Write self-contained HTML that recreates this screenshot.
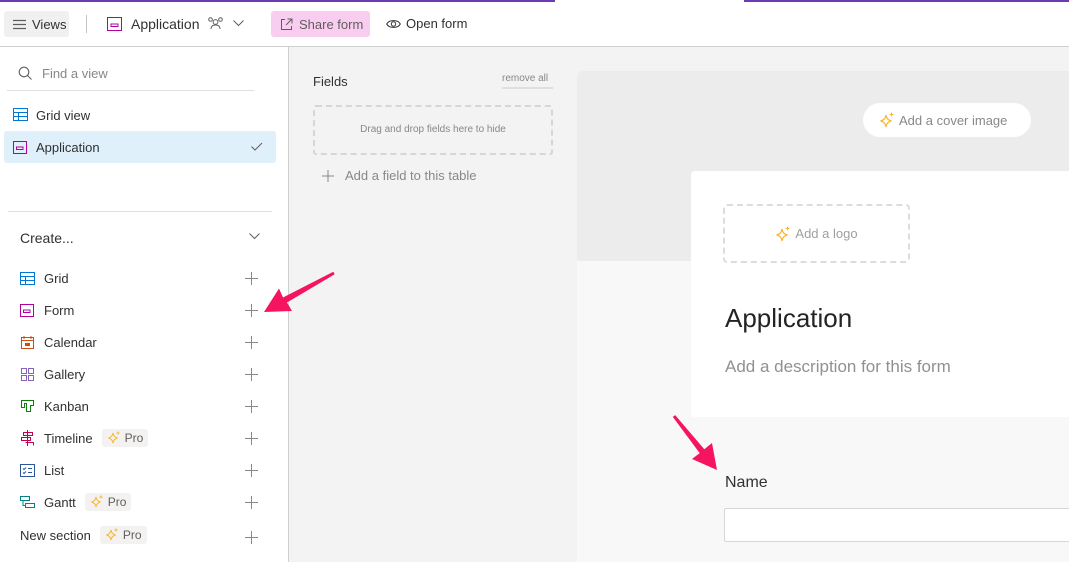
<!DOCTYPE html>
<html><head><meta charset="utf-8"><style>
*{box-sizing:border-box;margin:0;padding:0}
body{width:1069px;height:562px;overflow:hidden;position:relative;background:#fff;font-family:"Liberation Sans",sans-serif;color:#323130}
.a{position:absolute}
.t13{font-size:13px}
.plus{position:absolute;left:245px;width:13px;height:13px}
.plus:before{content:"";position:absolute;left:6px;top:0;width:1px;height:13px;background:#8a8886}
.plus:after{content:"";position:absolute;top:6px;left:0;width:13px;height:1px;background:#8a8886}
.item{position:absolute;left:20px;height:20px;display:flex;align-items:center;font-size:13px;color:#323130}
.item svg{margin-right:9px}
.pro{display:inline-flex;align-items:center;background:#f3f2f1;border-radius:3px;height:18px;padding:0 5px;margin-left:9px;font-size:12px;color:#605e5c}
.pro svg{margin-right:4px}
</style></head><body>
<div class="a" style="left:0;top:0;width:555px;height:2px;background:#6b3bb3"></div>
<div class="a" style="left:744px;top:0;width:325px;height:2px;background:#6b3bb3"></div>
<!-- top bar -->
<div class="a" style="left:4px;top:11px;width:65px;height:26px;background:#f0f0f0;border-radius:3px;font-size:13px;display:flex;align-items:center;padding-left:9px">
<svg width="13" height="11" style="margin-right:6px"><path d="M0 1.5h13M0 5.5h13M0 9.5h13" stroke="#605e5c" stroke-width="1.3"/></svg>Views</div>
<div class="a" style="left:86px;top:15px;width:1px;height:18px;background:#c8c6c4"></div>
<svg class="a" style="left:107px;top:17px" width="15" height="14"><rect x=".5" y=".5" width="14" height="13" fill="none" stroke="#b4009e"/><rect x="4" y="7" width="7" height="2.5" fill="none" stroke="#b4009e"/></svg>
<div class="a" style="left:131px;top:16px;font-size:14px;color:#323130">Application</div>
<svg class="a" style="left:207px;top:16px" width="17" height="14"><circle cx="8.5" cy="6" r="2.4" fill="none" stroke="#605e5c"/><path d="M4 13c0-3 2-4 4.5-4s4.5 1 4.5 4" fill="none" stroke="#605e5c"/><circle cx="3.5" cy="3.5" r="1.8" fill="none" stroke="#605e5c"/><circle cx="13.5" cy="3.5" r="1.8" fill="none" stroke="#605e5c"/></svg>
<svg class="a" style="left:233px;top:20px" width="11" height="7"><path d="M.5.5l5 5 5-5" fill="none" stroke="#605e5c"/></svg>
<div class="a" style="left:271px;top:11px;width:99px;height:26px;background:#f9cdf0;border-radius:3px;font-size:13px;color:#605e5c;display:flex;align-items:center;padding-left:9px">
<svg width="13" height="13" style="margin-right:6px"><path d="M5 1.5H1.5v10h10V8M7.5 1h4.5v4.5M12 1L6 7" fill="none" stroke="#605e5c"/></svg>Share form</div>
<div class="a" style="left:386px;top:16px;font-size:13px;color:#323130;display:flex;align-items:center">
<svg width="15" height="10" style="margin-right:5px"><path d="M.7 5C3 .5 12 .5 14.3 5 12 9.5 3 9.5.7 5z" fill="none" stroke="#323130"/><circle cx="7.5" cy="5" r="2.2" fill="none" stroke="#323130"/></svg>Open form</div>
<div class="a" style="left:0;top:46px;width:1069px;height:1px;background:#d0d0d0"></div>
<!-- sidebar -->
<div class="a" style="left:288px;top:47px;width:1px;height:515px;background:#d0d0d0"></div>
<svg class="a" style="left:18px;top:66px" width="14" height="14"><circle cx="6" cy="6" r="4.8" fill="none" stroke="#605e5c" stroke-width="1.1"/><path d="M9.5 9.5l4 4" stroke="#605e5c" stroke-width="1.1"/></svg>
<div class="a t13" style="left:42px;top:66px;color:#8a8886">Find a view</div>
<div class="a" style="left:7px;top:90px;width:247px;height:1px;background:#e1dfdd"></div>
<svg class="a" style="left:13px;top:108px" width="15" height="13"><rect x=".5" y=".5" width="14" height="12" fill="none" stroke="#0078d4"/><path d="M.5 4.5h14M.5 8.5h14M5.5 4.5v8" stroke="#0078d4"/></svg>
<div class="a t13" style="left:36px;top:108px">Grid view</div>
<div class="a" style="left:4px;top:131px;width:272px;height:32px;background:#dff0fa;border-radius:3px"></div>
<svg class="a" style="left:13px;top:141px" width="14" height="13"><rect x=".5" y=".5" width="13" height="12" fill="none" stroke="#b4009e"/><rect x="3.5" y="6" width="6.5" height="2.5" fill="none" stroke="#b4009e"/></svg>
<div class="a t13" style="left:36px;top:140px">Application</div>
<svg class="a" style="left:251px;top:142px" width="12" height="9"><path d="M.5 4.5l3.5 3.5 7-7" fill="none" stroke="#605e5c"/></svg>
<div class="a" style="left:8px;top:211px;width:264px;height:1px;background:#e1dfdd"></div>
<div class="a" style="left:20px;top:230px;font-size:14px">Create...</div>
<svg class="a" style="left:249px;top:233px" width="11" height="7"><path d="M.5.5l5 5 5-5" fill="none" stroke="#605e5c"/></svg>

<div class="item" style="top:268px"><svg width="15" height="13"><rect x=".5" y=".5" width="14" height="12" fill="none" stroke="#0078d4"/><path d="M.5 4.5h14M.5 8.5h14M5.5 4.5v8" stroke="#0078d4"/></svg>Grid</div>
<div class="plus" style="top:272px"></div>
<div class="item" style="top:300px"><svg width="15" height="13"><rect x=".5" y=".5" width="13" height="12" fill="none" stroke="#b4009e"/><rect x="3.5" y="6" width="6.5" height="2.5" fill="none" stroke="#b4009e"/></svg>Form</div>
<div class="plus" style="top:304px"></div>
<div class="item" style="top:332px"><svg width="15" height="14"><rect x="1.5" y="2.5" width="12" height="11" fill="none" stroke="#ca5010"/><path d="M1.5 5.5h12M4 1v3M11 1v3" stroke="#ca5010"/><rect x="5" y="8" width="5" height="3" fill="#ca5010"/></svg>Calendar</div>
<div class="plus" style="top:336px"></div>
<div class="item" style="top:364px"><svg width="15" height="14"><rect x="1.5" y="1.5" width="5" height="5" fill="none" stroke="#8764b8"/><rect x="8.5" y="1.5" width="5" height="5" fill="none" stroke="#8764b8"/><rect x="1.5" y="8.5" width="5" height="5" fill="none" stroke="#8764b8"/><rect x="8.5" y="8.5" width="5" height="5" fill="none" stroke="#8764b8"/></svg>Gallery</div>
<div class="plus" style="top:368px"></div>
<div class="item" style="top:396px"><svg width="15" height="14"><path d="M1.5 1.5h12v5h-3v6h-4v-8h-2v4h-3z" fill="none" stroke="#107c10"/></svg>Kanban</div>
<div class="plus" style="top:400px"></div>
<div class="item" style="top:428px"><svg width="15" height="16"><path d="M7.5 0v16M3.5 2.5h9v3h-9zM1.5 7.5h9v3h-9zM5.5 12.5h8v3" fill="none" stroke="#c30052"/></svg>Timeline<span class="pro"><svg width="14" height="14"><path d="M6 2Q6.6 6 10.5 7 6.6 8 6 12 5.4 8 1.5 7 5.4 6 6 2z" fill="none" stroke="#f7b731"/><path d="M11 0.5v3M9.5 2h3" stroke="#f7b731"/></svg>Pro</span></div>
<div class="plus" style="top:432px"></div>
<div class="item" style="top:460px"><svg width="15" height="13"><rect x=".5" y=".5" width="14" height="12" fill="none" stroke="#2b579a"/><path d="M3 4.5l1 1 2-2M3 8.5l1 1 2-2M8 4.5h4M8 8.5h4" fill="none" stroke="#2b579a"/></svg>List</div>
<div class="plus" style="top:464px"></div>
<div class="item" style="top:492px"><svg width="15" height="14"><rect x=".5" y="1.5" width="9" height="4" fill="none" stroke="#038387"/><rect x="5.5" y="8.5" width="9" height="4" fill="none" stroke="#038387"/><path d="M3 5.5v5h2.5" fill="none" stroke="#038387"/></svg>Gantt<span class="pro"><svg width="14" height="14"><path d="M6 2Q6.6 6 10.5 7 6.6 8 6 12 5.4 8 1.5 7 5.4 6 6 2z" fill="none" stroke="#f7b731"/><path d="M11 0.5v3M9.5 2h3" stroke="#f7b731"/></svg>Pro</span></div>
<div class="plus" style="top:496px"></div>
<div class="item" style="top:525px">New section<span class="pro"><svg width="14" height="14"><path d="M6 2Q6.6 6 10.5 7 6.6 8 6 12 5.4 8 1.5 7 5.4 6 6 2z" fill="none" stroke="#f7b731"/><path d="M11 0.5v3M9.5 2h3" stroke="#f7b731"/></svg>Pro</span></div>
<div class="plus" style="top:531px"></div>

<!-- fields panel -->
<div class="a" style="left:289px;top:47px;width:780px;height:515px;background:#f3f3f3"></div>
<div class="a" style="left:313px;top:74px;font-size:13px;color:#323130">Fields</div>
<div class="a" style="left:502px;top:73px;font-size:10px;color:#8a8886;border-bottom:2px solid #e1dfdd;padding-bottom:3px;width:51px">remove all</div>
<div class="a" style="left:313px;top:105px;width:240px;height:50px;border:2px dashed #d6d6d6;border-radius:3px;font-size:10px;color:#8a8886;text-align:center;line-height:46px">Drag and drop fields here to hide</div>
<svg class="a" style="left:322px;top:170px" width="12" height="12"><path d="M6 0v12M0 6h12" stroke="#8a8886"/></svg>
<div class="a t13" style="left:345px;top:168px;color:#8a8886">Add a field to this table</div>

<!-- form canvas -->
<div class="a" style="left:577px;top:71px;width:492px;height:491px;background:#f8f8f8;border-radius:6px 0 0 0"></div>
<div class="a" style="left:577px;top:71px;width:492px;height:190px;background:#ececec;border-radius:6px 0 0 0"></div>
<div class="a" style="left:863px;top:103px;width:168px;height:34px;background:#fff;border-radius:17px;display:flex;align-items:center;padding-left:16px;font-size:13px;color:#8a8886">
<svg width="16" height="16" style="margin-right:4px"><path d="M7 3Q7.6 8 12.5 9 7.6 10 7 15 6.4 10 1.5 9 6.4 8 7 3z" fill="none" stroke="#f7b731" stroke-width="1.2"/><path d="M12.5.5v4M10.5 2.5h4" stroke="#f7b731"/></svg>Add a cover image</div>
<div class="a" style="left:691px;top:171px;width:378px;height:246px;background:#fff;border-radius:4px 0 0 4px"></div>
<div class="a" style="left:723px;top:204px;width:187px;height:59px;border:2px dashed #dcdcdc;border-radius:4px;display:flex;align-items:center;justify-content:center;font-size:13px;color:#a19f9d">
<svg width="16" height="16" style="margin-right:4px"><path d="M7 3Q7.6 8 12.5 9 7.6 10 7 15 6.4 10 1.5 9 6.4 8 7 3z" fill="none" stroke="#f7b731" stroke-width="1.2"/><path d="M12.5.5v4M10.5 2.5h4" stroke="#f7b731"/></svg>Add a logo</div>
<div class="a" style="left:725px;top:303px;font-size:26px;color:#252423">Application</div>
<div class="a" style="left:725px;top:357px;font-size:17px;color:#929090">Add a description for this form</div>
<div class="a" style="left:725px;top:474px;font-size:16px;color:#323130">Name</div>
<div class="a" style="left:724px;top:508px;width:360px;height:34px;background:#fff;border:1px solid #d6d6d6;border-radius:2px"></div>

<svg class="a" style="left:0;top:0" width="1069" height="562">
<polygon points="264,312 292,311 287,302.5 334.7,274.3 333.3,271.7 283,297.5 279,288.5" fill="#f5145f"/>
<polygon points="717,470 712,443 704.3,449.3 675.2,415.1 672.8,416.9 699.7,453.1 692,459" fill="#f5145f"/>
</svg>
</body></html>
